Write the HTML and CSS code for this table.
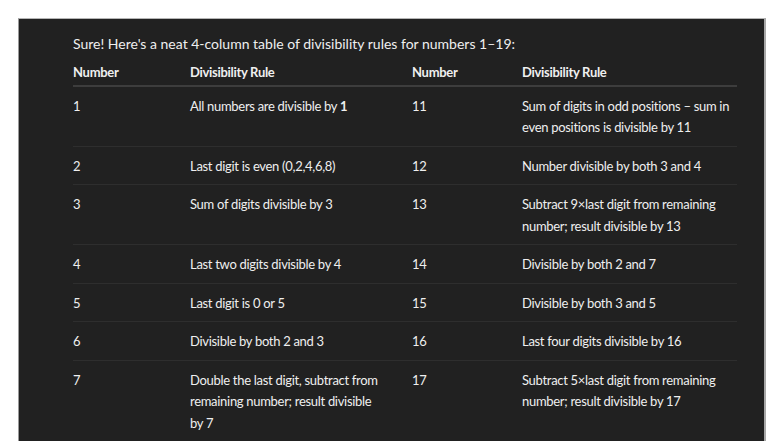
FILE: index.html
```html
<!DOCTYPE html>
<html lang="en">
<head>
<meta charset="utf-8">
<title>Divisibility rules</title>
<link rel="stylesheet" href="styles.css">
</head>
<body>
<div class="panel">
  <p class="intro">Sure! Here's a neat 4-column table of divisibility rules for numbers 1–19:</p>
  <table class="rules">
    <colgroup>
      <col class="c-num1">
      <col class="c-rule1">
      <col class="c-num2">
      <col class="c-rule2">
    </colgroup>
    <thead>
      <tr><th>Number</th><th>Divisibility Rule</th><th>Number</th><th>Divisibility Rule</th></tr>
    </thead>
    <tbody>
      <tr><td>1</td><td>All numbers are divisible by <strong>1</strong></td><td>11</td><td>Sum of digits in odd positions – sum in even positions is divisible by 11</td></tr>
      <tr><td>2</td><td>Last digit is even (0,2,4,6,8)</td><td>12</td><td>Number divisible by both 3 and 4</td></tr>
      <tr><td>3</td><td>Sum of digits divisible by 3</td><td>13</td><td>Subtract 9×last digit from remaining number; result divisible by 13</td></tr>
      <tr><td>4</td><td>Last two digits divisible by 4</td><td>14</td><td>Divisible by both 2 and 7</td></tr>
      <tr><td>5</td><td>Last digit is 0 or 5</td><td>15</td><td>Divisible by both 3 and 5</td></tr>
      <tr><td>6</td><td>Divisible by both 2 and 3</td><td>16</td><td>Last four digits divisible by 16</td></tr>
      <tr><td>7</td><td>Double the last digit, subtract from remaining number; result divisible by 7</td><td>17</td><td>Subtract 5×last digit from remaining number; result divisible by 17</td></tr>
    </tbody>
  </table>
</div>
</body>
</html>
```

FILE: styles.css
```css
html, body {
  margin: 0;
  padding: 0;
  background: #ffffff;
}
body {
  font-family: "Lato", "Noto Sans", sans-serif;
  color: #efefef;
  height: 441px;
  overflow: hidden;
}
.panel {
  margin: 18px 0 0 18px;
  width: 748px;
  height: 423px;
  overflow: hidden;
  background: #212121;
  border-left: 1px solid #9a9a9a;
  border-top: 1px solid #b5b5b5;
  border-right: 2px solid #a8a8a8;
  box-sizing: border-box;
  padding: 14px 0 0 54px;
}
.intro {
  margin: 0 0 5px 0;
  font-size: 14px;
  line-height: 22px;
}
.rules {
  width: 664px;
  border-collapse: collapse;
  table-layout: fixed;
  font-size: 13px;
  letter-spacing: -0.3px;
  line-height: 21.5px;
}
.c-num1 { width: 117px; }
.c-rule1 { width: 222px; }
.c-num2 { width: 110px; }
.c-rule2 { width: 215px; }
.rules th {
  text-align: left;
  font-weight: 700;
  padding: 2px 16px 1px 0;
  border-bottom: 2px solid #3d3d3d;
}
.rules td {
  vertical-align: top;
  padding: 9px 16px 7px 0;
  border-bottom: 1px solid #2e2e2e;
}
.rules td:nth-child(2) {
  padding-right: 28px;
}
.rules th:last-child,
.rules td:last-child {
  padding-right: 0;
}
.rules strong {
  font-weight: 700;
}
```
